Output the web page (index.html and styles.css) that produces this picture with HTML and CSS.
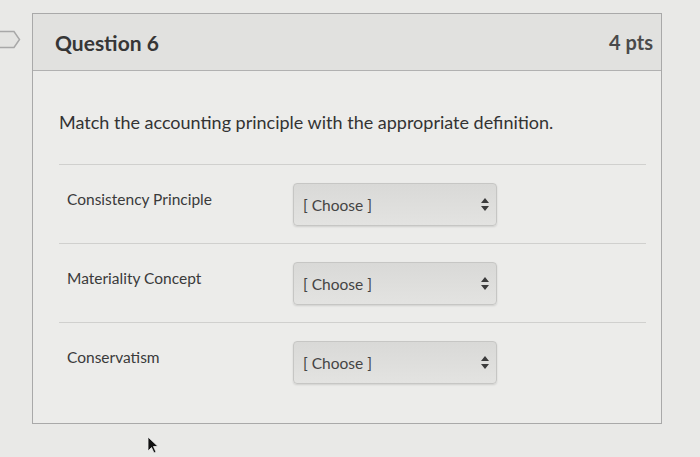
FILE: index.html
```html
<!DOCTYPE html>
<html>
    <head>
        <meta charset="utf-8" />
        <title>Question 6</title>
        <link rel="stylesheet" href="styles.css">
    </head>
    <body>
        <div class="page">
            <div class="marker">
                <svg width="21" height="19" viewBox="0 0 21 19"><path d="M-2 1.5 H14 L19.5 9.5 L14 17.5 H-2" fill="#e4e4e2" stroke="#a8a8a8" stroke-width="1.5"/></svg>
            </div>
            <div class="question">
                <div class="question_header">
                    <h2 class="question_title">Question 6</h2>
                    <span class="points">4 pts</span>
                </div>
                <div class="question_body">
                    <p class="question_text">Match the accounting principle with the appropriate definition.</p>
                    <div class="match_row">
                        <div class="match_label">Consistency Principle</div>
                        <div class="choose">
                            <span>[ Choose ]</span>
                            <svg width="8" height="13" viewBox="0 0 8 13"><path d="M4 0 L8 5 H0 Z M0 8 H8 L4 13 Z" fill="#3c3c3c"/></svg>
                        </div>
                    </div>
                    <div class="match_row">
                        <div class="match_label">Materiality Concept</div>
                        <div class="choose">
                            <span>[ Choose ]</span>
                            <svg width="8" height="13" viewBox="0 0 8 13"><path d="M4 0 L8 5 H0 Z M0 8 H8 L4 13 Z" fill="#3c3c3c"/></svg>
                        </div>
                    </div>
                    <div class="match_row last">
                        <div class="match_label">Conservatism</div>
                        <div class="choose">
                            <span>[ Choose ]</span>
                            <svg width="8" height="13" viewBox="0 0 8 13"><path d="M4 0 L8 5 H0 Z M0 8 H8 L4 13 Z" fill="#3c3c3c"/></svg>
                        </div>
                    </div>
                </div>
            </div>
            <svg class="cursor" width="12" height="18" viewBox="0 0 12 18"><path d="M1 1 V15 L4.5 11.5 L7 17 L9 16 L6.5 10.5 H11 Z" fill="#111" stroke="#eee" stroke-width="0.8"/></svg>
        </div>
    </body>
</html>
```

FILE: styles.css
```css
* {
	padding: 0;
	margin: 0;
	box-sizing: border-box;
}
body {
	background-color: #e9e9e7;
	font-family: Lato, "Liberation Sans", sans-serif;
	color: #3a3a3a;
}
.page {
	width: 700px;
	height: 457px;
	padding-top: 13px;
	display: flex;
	gap: 12px;
	position: relative;
}
.marker {
	width: 20px;
	padding-top: 17px;
}
.question {
	width: 630px;
	height: 411px;
	border: 1px solid #a9a9a9;
	background-color: #ececea;
}
.question_header {
	height: 57px;
	background-color: #e1e1df;
	border-bottom: 1px solid #b1b1b1;
	display: flex;
	align-items: center;
	justify-content: space-between;
	padding: 0 8px 0 22px;
}
.question_title {
	font-size: 21px;
	font-weight: 700;
	color: #363636;
}
.points {
	font-size: 20px;
	font-weight: 700;
	color: #4a4a4a;
}
.question_body {
	padding: 0 15px 0 26px;
}
.question_text {
	font-size: 18px;
	color: #333;
	padding-top: 40px;
	padding-bottom: 31px;
	border-bottom: 1px solid #d0d0ce;
}
.match_row {
	display: flex;
	padding: 18px 0 17px 8px;
	border-bottom: 1px solid #d0d0ce;
}
.match_row.last {
	border-bottom: none;
}
.match_label {
	width: 226px;
	font-size: 15.5px;
	color: #3a3a3a;
	padding-top: 7px;
}
.choose {
	width: 204px;
	height: 43px;
	border: 1px solid #c6c6c4;
	border-radius: 4px;
	background: linear-gradient(#d9d9d7, #e3e3e1);
	box-shadow: 0 1px 2px rgba(0,0,0,0.12);
	display: flex;
	align-items: center;
	justify-content: space-between;
	padding: 0 7px 0 9px;
	font-size: 15.5px;
	color: #444;
}
.cursor {
	position: absolute;
	left: 147px;
	top: 436px;
}
```
